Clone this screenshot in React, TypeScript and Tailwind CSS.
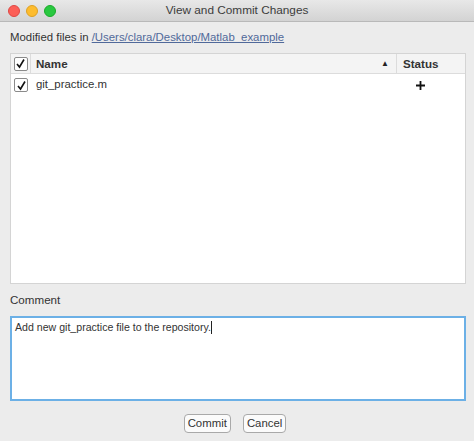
import React from "react";

function Check() {
  return (
    <div className="w-[14px] h-[14px] border border-[#8a8a8a] bg-white flex items-center justify-center rounded-[2px]">
      <svg width="11" height="11" viewBox="0 0 11 11">
        <path d="M2 6 L4.5 9 L9 1.5" fill="none" stroke="#111" strokeWidth="1.6" />
      </svg>
    </div>
  );
}

export default function App() {
  return (
    <div className="w-[474px] h-[441px] bg-[#ececec] flex flex-col overflow-hidden" style={{ fontFamily: '"Liberation Sans", Arial, sans-serif' }}>
      <div className="h-[22px] bg-gradient-to-b from-[#e8e8e8] to-[#d3d3d3] border-b border-[#b9b9b9] relative flex items-center justify-center shrink-0">
        <div className="absolute left-[8px] top-[5px] flex gap-[6px]">
          <div className="w-[12px] h-[12px] rounded-full bg-[#fc5f57] border border-[#df4744]" />
          <div className="w-[12px] h-[12px] rounded-full bg-[#fdbc2e] border border-[#dea123]" />
          <div className="w-[12px] h-[12px] rounded-full bg-[#29c840] border border-[#1aab29]" />
        </div>
        <span className="text-[11.8px] text-[#3c3c3c]">View and Commit Changes</span>
      </div>
      <div className="flex flex-col pl-[10px] pr-[8px] flex-1">
        <div className="h-[30px] flex items-center text-[11.4px] text-[#333] mt-[1px]">
          Modified files in&nbsp;<span className="text-[#50699a] underline">/Users/clara/Desktop/Matlab_example</span>
        </div>
        <div className="h-[231px] border border-[#d4d4d4] bg-white flex flex-col">
          <div className="h-[20px] flex bg-[#f4f4f4] border-b border-[#dcdcdc] text-[11.6px] font-bold text-[#333]">
            <div className="w-[20px] flex items-center justify-center border-r border-[#dcdcdc]">
              <Check />
            </div>
            <div className="flex-1 flex items-center pl-[5px] border-r border-[#dcdcdc]">
              <span>Name</span>
              <span className="ml-auto mr-[7px] text-[8px] text-[#222]">▲</span>
            </div>
            <div className="w-[68px] flex items-center pl-[6px]">Status</div>
          </div>
          <div className="h-[20px] flex text-[11.4px] text-[#333] mt-[1px]">
            <div className="w-[20px] flex items-center justify-center">
              <Check />
            </div>
            <div className="flex-1 flex items-center pl-[5px]">git_practice.m</div>
            <div className="w-[68px] flex items-center pl-[18px]">
              <svg width="11" height="11" viewBox="0 0 11 11">
                <path d="M5.5 1 V10 M1 5.5 H10" stroke="#111" strokeWidth="1.8" />
              </svg>
            </div>
          </div>
        </div>
        <div className="h-[32px] flex items-center text-[11.6px] text-[#333]">Comment</div>
        <div className="h-[85px] border-2 border-[#6cb0e6] bg-white px-[3px] pt-[2px] text-[10.6px] text-[#333]">
          Add new git_practice file to the repository.<span className="inline-block w-px h-[13px] bg-[#222] align-middle -mt-[2px]" />
        </div>
        <div className="flex justify-center gap-[12px] mt-[13px] pr-[6px]">
          <button className="h-[19px] px-[3px] border border-[#a9a9a9] rounded-[4px] bg-[#fbfbfb] text-[11.4px] text-[#333] leading-none">Commit</button>
          <button className="h-[19px] px-[3px] border border-[#a9a9a9] rounded-[4px] bg-[#fbfbfb] text-[11.4px] text-[#333] leading-none">Cancel</button>
        </div>
      </div>
    </div>
  );
}
